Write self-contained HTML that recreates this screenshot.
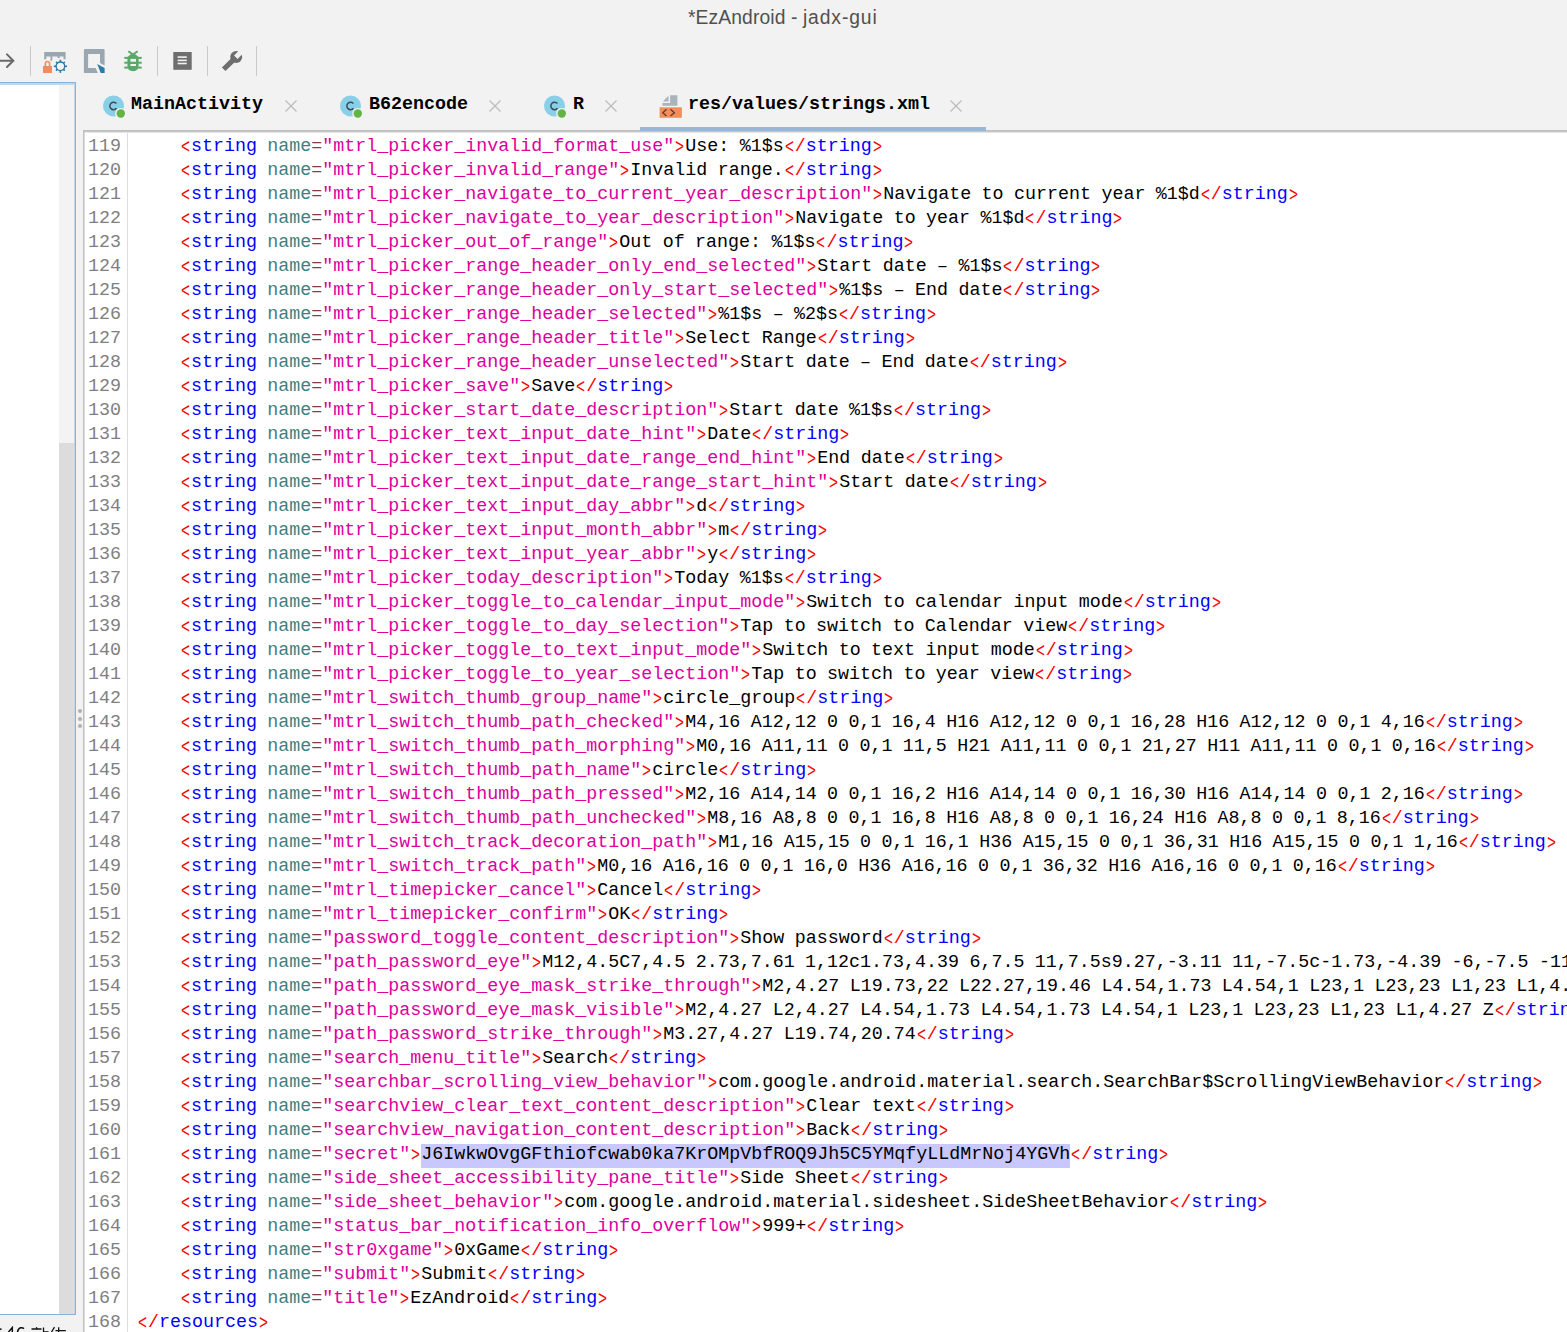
<!DOCTYPE html>
<html><head><meta charset="utf-8">
<style>
*{margin:0;padding:0;box-sizing:border-box}
html,body{width:1567px;height:1332px;overflow:hidden;background:#f2f2f2;font-family:"Liberation Sans",sans-serif;position:relative}
.abs{position:absolute}
#title{position:absolute;left:0;top:0;width:1567px;height:36px;text-align:center;font-size:19.3px;color:#505050;}
#title span{position:absolute;left:688px;top:7px;white-space:pre;letter-spacing:0.1px}#title b{font-weight:normal;letter-spacing:0.9px}
.sep{position:absolute;top:46px;width:1px;height:30px;background:#c9c9c9}
#left{position:absolute;left:0;top:82px;width:76px;height:1233px;background:#8ab1d7}
#linner{position:absolute;left:0;top:1px;width:75px;height:1231px;background:#c3d6ea}
#lwhite{position:absolute;left:0;top:2px;width:74px;height:1229px;background:#fff}
#lscroll{position:absolute;left:59px;top:0;width:15px;height:1229px;background:#f3f3f3}
#lthumb{position:absolute;left:0;top:358px;width:15px;height:871px;background:#dcdcdc}
.dot{position:absolute;left:78px;width:4px;height:4px;border-radius:50%;background:#b0b0b0}
#editor{position:absolute;left:83px;top:130px;width:1484px;height:1202px;background:#fff;}
#eb1{position:absolute;left:83px;top:130px;width:1484px;height:1px;background:#bfbfbf}
#eb2{position:absolute;left:83px;top:131px;width:1484px;height:1px;background:#c6c6c6}
#eb3{position:absolute;left:84px;top:132px;width:1483px;height:1px;background:#e4e4e4}
#eb4{position:absolute;left:83px;top:130px;width:1px;height:1202px;background:#c0c0c0}
#eb5{position:absolute;left:84px;top:132px;width:1px;height:1200px;background:#dcdcdc}
#gline{position:absolute;left:127px;top:133px;width:1px;height:1199px;background:#dddddd}
#gutter{position:absolute;left:85px;top:135px;width:36px;text-align:right;color:#808080;font-family:"Liberation Mono",monospace;font-size:18.333px;line-height:24px;white-space:pre}
#code{position:absolute;left:137px;top:135px;color:#000;font-family:"Liberation Mono",monospace;font-size:18.333px;line-height:24px;white-space:pre;word-spacing:-0.6px}
#code i{font-style:normal}
#code b.c{font-weight:normal;color:#ff0000;display:inline-block;transform:translateY(1.8px) scale(0.82,1.08)}
.ind{display:inline-block;width:42.9px}
.d{color:#ff0000}.t{color:#0000ff}.a{color:#3f7f7f}.o{color:#804040}.v{color:#dc009c}
#sel{position:absolute;left:421px;top:1144px;width:649px;height:24px;background:#c8c8ff}
.tab{position:absolute;top:93px;font-family:"Liberation Mono",monospace;font-weight:bold;font-size:18.333px;line-height:24px;color:#000;white-space:pre}
.x{position:absolute;top:100px}
</style></head><body>
<div id="title"><span>*EzAndroid - <b>jadx-gui</b></span></div>

<!-- toolbar -->
<svg class="abs" style="left:0;top:50px" width="16" height="22" viewBox="0 0 16 22"><path d="M-1 10.7H13.5M7 4.4L13.3 10.7L7 17" stroke="#6a6a6a" stroke-width="2" stroke-linecap="round" stroke-linejoin="round" fill="none"/></svg>
<div class="sep" style="left:30px"></div>
<div class="sep" style="left:157px"></div>
<div class="sep" style="left:207px"></div>
<div class="sep" style="left:256px"></div>

<!-- icon1 lock gear -->
<svg class="abs" style="left:42px;top:50px" width="26" height="24" viewBox="0 0 26 24">
<path d="M2.2 2.1H23.6V9.3H21.5V6.5H17.7V8.1H15.6V6.5H10.3V10.1L9.2 11.2H8.5V6.5H4.3V9.3H2.2Z" fill="#9aa7b0"/>
<rect x="1" y="16" width="9" height="7" fill="#f28c5a"/>
<path d="M3.4 16.2V13.6A2.1 2.1 0 0 1 7.6 13.6V16.2" stroke="#f28c5a" stroke-width="1.7" fill="none"/>
<g transform="translate(18.4 16.3)" fill="#2a7ca5">
<circle r="4.3" fill="none" stroke="#2a7ca5" stroke-width="1.3"/>
<rect x="-0.8" y="-6.6" width="1.6" height="2.6"/><rect x="-0.8" y="4" width="1.6" height="2.6"/>
<rect x="-6.6" y="-0.8" width="2.6" height="1.6"/><rect x="4" y="-0.8" width="2.6" height="1.6"/>
<g transform="rotate(45)"><rect x="-0.8" y="-6.2" width="1.6" height="2.2"/><rect x="-0.8" y="4" width="1.6" height="2.2"/>
<rect x="-6.2" y="-0.8" width="2.2" height="1.6"/><rect x="4" y="-0.8" width="2.2" height="1.6"/></g>
</g>
</svg>
<!-- icon2 square pen -->
<svg class="abs" style="left:83px;top:48px" width="23" height="26" viewBox="0 0 23 26">
<path d="M0.9 2.1Q0.9 1.1 2 1.1H20.5Q21.6 1.1 21.6 2.2V17.4L17 15V6H5.1V20.1H12.6L14.9 24.9H0.9Z" fill="#9aa7b0"/>
<path d="M14.2 15.9L21.6 20.1V24.9H17.7Z" fill="#2a7ca5"/>
</svg>
<!-- bug -->
<svg class="abs" style="left:123px;top:49px" width="20" height="23" viewBox="0 0 20 23">
<path d="M5.4 2.2L10 5.6L14.6 2.2" stroke="#59a869" stroke-width="2" fill="none"/>
<path d="M7.4 5.6Q10 4.2 12.6 5.6L15.6 7.9V16.5Q15.6 22.2 10 22.2Q4.4 22.2 4.4 16.5V7.9Z" fill="#59a869"/>
<rect x="1.3" y="7.9" width="3.6" height="2" fill="#59a869"/><rect x="15.1" y="7.9" width="3.6" height="2" fill="#59a869"/>
<rect x="1.3" y="12.7" width="3.6" height="2" fill="#59a869"/><rect x="15.1" y="12.7" width="3.6" height="2" fill="#59a869"/>
<rect x="1.3" y="17.6" width="3.6" height="2" fill="#59a869"/><rect x="15.1" y="17.6" width="3.6" height="2" fill="#59a869"/>
<rect x="7.4" y="9.9" width="5.6" height="2.8" fill="#f2f2f2"/><rect x="7.4" y="15" width="5.6" height="2" fill="#f2f2f2"/>
</svg>
<!-- log -->
<svg class="abs" style="left:173px;top:52px" width="19" height="18" viewBox="0 0 19 18">
<rect x="0.3" y="0" width="18.4" height="17.8" fill="#6e6e6e"/>
<rect x="4.6" y="4.3" width="9.2" height="1.6" fill="#f2f2f2"/><rect x="4.6" y="7.6" width="9.2" height="1.6" fill="#f2f2f2"/><rect x="4.6" y="10.7" width="9.2" height="1.6" fill="#f2f2f2"/>
</svg>
<!-- wrench -->
<svg class="abs" style="left:221px;top:50px" width="23" height="23" viewBox="0 0 23 23">
<defs><mask id="wm"><rect width="23" height="23" fill="#fff"/><path d="M19.5 -1L13.1 5.4L16.5 8.9L23.2 2.4Z" fill="#000"/></mask></defs>
<g fill="#6e6e6e" mask="url(#wm)"><path d="M0.9 17.5L4.5 21L13.6 12.2L10 8.6Z"/><circle cx="15.2" cy="6.9" r="6"/></g>
</svg>

<div id="left"><div id="linner"><div id="lwhite"><div id="lscroll"><div id="lthumb"></div></div></div></div></div>
<div class="dot" style="top:709px"></div><div class="dot" style="top:716.7px"></div><div class="dot" style="top:724.2px"></div>

<div id="editor"></div>
<div id="eb1"></div><div id="eb2"></div><div id="eb3"></div><div id="eb4"></div><div id="eb5"></div>
<div id="gline"></div>
<div id="sel"></div>
<div id="gutter">119
120
121
122
123
124
125
126
127
128
129
130
131
132
133
134
135
136
137
138
139
140
141
142
143
144
145
146
147
148
149
150
151
152
153
154
155
156
157
158
159
160
161
162
163
164
165
166
167
168</div>
<div id="code"><span class="ind"></span><b class="c">&lt;</b><i class="t">string</i> <i class="a">name</i><i class="o">=</i><i class="v">"mtrl_picker_invalid_format_use"</i><b class="c">&gt;</b>Use: %1$s<b class="c">&lt;</b><i class="d">/</i><i class="t">string</i><b class="c">&gt;</b>
<span class="ind"></span><b class="c">&lt;</b><i class="t">string</i> <i class="a">name</i><i class="o">=</i><i class="v">"mtrl_picker_invalid_range"</i><b class="c">&gt;</b>Invalid range.<b class="c">&lt;</b><i class="d">/</i><i class="t">string</i><b class="c">&gt;</b>
<span class="ind"></span><b class="c">&lt;</b><i class="t">string</i> <i class="a">name</i><i class="o">=</i><i class="v">"mtrl_picker_navigate_to_current_year_description"</i><b class="c">&gt;</b>Navigate to current year %1$d<b class="c">&lt;</b><i class="d">/</i><i class="t">string</i><b class="c">&gt;</b>
<span class="ind"></span><b class="c">&lt;</b><i class="t">string</i> <i class="a">name</i><i class="o">=</i><i class="v">"mtrl_picker_navigate_to_year_description"</i><b class="c">&gt;</b>Navigate to year %1$d<b class="c">&lt;</b><i class="d">/</i><i class="t">string</i><b class="c">&gt;</b>
<span class="ind"></span><b class="c">&lt;</b><i class="t">string</i> <i class="a">name</i><i class="o">=</i><i class="v">"mtrl_picker_out_of_range"</i><b class="c">&gt;</b>Out of range: %1$s<b class="c">&lt;</b><i class="d">/</i><i class="t">string</i><b class="c">&gt;</b>
<span class="ind"></span><b class="c">&lt;</b><i class="t">string</i> <i class="a">name</i><i class="o">=</i><i class="v">"mtrl_picker_range_header_only_end_selected"</i><b class="c">&gt;</b>Start date – %1$s<b class="c">&lt;</b><i class="d">/</i><i class="t">string</i><b class="c">&gt;</b>
<span class="ind"></span><b class="c">&lt;</b><i class="t">string</i> <i class="a">name</i><i class="o">=</i><i class="v">"mtrl_picker_range_header_only_start_selected"</i><b class="c">&gt;</b>%1$s – End date<b class="c">&lt;</b><i class="d">/</i><i class="t">string</i><b class="c">&gt;</b>
<span class="ind"></span><b class="c">&lt;</b><i class="t">string</i> <i class="a">name</i><i class="o">=</i><i class="v">"mtrl_picker_range_header_selected"</i><b class="c">&gt;</b>%1$s – %2$s<b class="c">&lt;</b><i class="d">/</i><i class="t">string</i><b class="c">&gt;</b>
<span class="ind"></span><b class="c">&lt;</b><i class="t">string</i> <i class="a">name</i><i class="o">=</i><i class="v">"mtrl_picker_range_header_title"</i><b class="c">&gt;</b>Select Range<b class="c">&lt;</b><i class="d">/</i><i class="t">string</i><b class="c">&gt;</b>
<span class="ind"></span><b class="c">&lt;</b><i class="t">string</i> <i class="a">name</i><i class="o">=</i><i class="v">"mtrl_picker_range_header_unselected"</i><b class="c">&gt;</b>Start date – End date<b class="c">&lt;</b><i class="d">/</i><i class="t">string</i><b class="c">&gt;</b>
<span class="ind"></span><b class="c">&lt;</b><i class="t">string</i> <i class="a">name</i><i class="o">=</i><i class="v">"mtrl_picker_save"</i><b class="c">&gt;</b>Save<b class="c">&lt;</b><i class="d">/</i><i class="t">string</i><b class="c">&gt;</b>
<span class="ind"></span><b class="c">&lt;</b><i class="t">string</i> <i class="a">name</i><i class="o">=</i><i class="v">"mtrl_picker_start_date_description"</i><b class="c">&gt;</b>Start date %1$s<b class="c">&lt;</b><i class="d">/</i><i class="t">string</i><b class="c">&gt;</b>
<span class="ind"></span><b class="c">&lt;</b><i class="t">string</i> <i class="a">name</i><i class="o">=</i><i class="v">"mtrl_picker_text_input_date_hint"</i><b class="c">&gt;</b>Date<b class="c">&lt;</b><i class="d">/</i><i class="t">string</i><b class="c">&gt;</b>
<span class="ind"></span><b class="c">&lt;</b><i class="t">string</i> <i class="a">name</i><i class="o">=</i><i class="v">"mtrl_picker_text_input_date_range_end_hint"</i><b class="c">&gt;</b>End date<b class="c">&lt;</b><i class="d">/</i><i class="t">string</i><b class="c">&gt;</b>
<span class="ind"></span><b class="c">&lt;</b><i class="t">string</i> <i class="a">name</i><i class="o">=</i><i class="v">"mtrl_picker_text_input_date_range_start_hint"</i><b class="c">&gt;</b>Start date<b class="c">&lt;</b><i class="d">/</i><i class="t">string</i><b class="c">&gt;</b>
<span class="ind"></span><b class="c">&lt;</b><i class="t">string</i> <i class="a">name</i><i class="o">=</i><i class="v">"mtrl_picker_text_input_day_abbr"</i><b class="c">&gt;</b>d<b class="c">&lt;</b><i class="d">/</i><i class="t">string</i><b class="c">&gt;</b>
<span class="ind"></span><b class="c">&lt;</b><i class="t">string</i> <i class="a">name</i><i class="o">=</i><i class="v">"mtrl_picker_text_input_month_abbr"</i><b class="c">&gt;</b>m<b class="c">&lt;</b><i class="d">/</i><i class="t">string</i><b class="c">&gt;</b>
<span class="ind"></span><b class="c">&lt;</b><i class="t">string</i> <i class="a">name</i><i class="o">=</i><i class="v">"mtrl_picker_text_input_year_abbr"</i><b class="c">&gt;</b>y<b class="c">&lt;</b><i class="d">/</i><i class="t">string</i><b class="c">&gt;</b>
<span class="ind"></span><b class="c">&lt;</b><i class="t">string</i> <i class="a">name</i><i class="o">=</i><i class="v">"mtrl_picker_today_description"</i><b class="c">&gt;</b>Today %1$s<b class="c">&lt;</b><i class="d">/</i><i class="t">string</i><b class="c">&gt;</b>
<span class="ind"></span><b class="c">&lt;</b><i class="t">string</i> <i class="a">name</i><i class="o">=</i><i class="v">"mtrl_picker_toggle_to_calendar_input_mode"</i><b class="c">&gt;</b>Switch to calendar input mode<b class="c">&lt;</b><i class="d">/</i><i class="t">string</i><b class="c">&gt;</b>
<span class="ind"></span><b class="c">&lt;</b><i class="t">string</i> <i class="a">name</i><i class="o">=</i><i class="v">"mtrl_picker_toggle_to_day_selection"</i><b class="c">&gt;</b>Tap to switch to Calendar view<b class="c">&lt;</b><i class="d">/</i><i class="t">string</i><b class="c">&gt;</b>
<span class="ind"></span><b class="c">&lt;</b><i class="t">string</i> <i class="a">name</i><i class="o">=</i><i class="v">"mtrl_picker_toggle_to_text_input_mode"</i><b class="c">&gt;</b>Switch to text input mode<b class="c">&lt;</b><i class="d">/</i><i class="t">string</i><b class="c">&gt;</b>
<span class="ind"></span><b class="c">&lt;</b><i class="t">string</i> <i class="a">name</i><i class="o">=</i><i class="v">"mtrl_picker_toggle_to_year_selection"</i><b class="c">&gt;</b>Tap to switch to year view<b class="c">&lt;</b><i class="d">/</i><i class="t">string</i><b class="c">&gt;</b>
<span class="ind"></span><b class="c">&lt;</b><i class="t">string</i> <i class="a">name</i><i class="o">=</i><i class="v">"mtrl_switch_thumb_group_name"</i><b class="c">&gt;</b>circle_group<b class="c">&lt;</b><i class="d">/</i><i class="t">string</i><b class="c">&gt;</b>
<span class="ind"></span><b class="c">&lt;</b><i class="t">string</i> <i class="a">name</i><i class="o">=</i><i class="v">"mtrl_switch_thumb_path_checked"</i><b class="c">&gt;</b>M4,16 A12,12 0 0,1 16,4 H16 A12,12 0 0,1 16,28 H16 A12,12 0 0,1 4,16<b class="c">&lt;</b><i class="d">/</i><i class="t">string</i><b class="c">&gt;</b>
<span class="ind"></span><b class="c">&lt;</b><i class="t">string</i> <i class="a">name</i><i class="o">=</i><i class="v">"mtrl_switch_thumb_path_morphing"</i><b class="c">&gt;</b>M0,16 A11,11 0 0,1 11,5 H21 A11,11 0 0,1 21,27 H11 A11,11 0 0,1 0,16<b class="c">&lt;</b><i class="d">/</i><i class="t">string</i><b class="c">&gt;</b>
<span class="ind"></span><b class="c">&lt;</b><i class="t">string</i> <i class="a">name</i><i class="o">=</i><i class="v">"mtrl_switch_thumb_path_name"</i><b class="c">&gt;</b>circle<b class="c">&lt;</b><i class="d">/</i><i class="t">string</i><b class="c">&gt;</b>
<span class="ind"></span><b class="c">&lt;</b><i class="t">string</i> <i class="a">name</i><i class="o">=</i><i class="v">"mtrl_switch_thumb_path_pressed"</i><b class="c">&gt;</b>M2,16 A14,14 0 0,1 16,2 H16 A14,14 0 0,1 16,30 H16 A14,14 0 0,1 2,16<b class="c">&lt;</b><i class="d">/</i><i class="t">string</i><b class="c">&gt;</b>
<span class="ind"></span><b class="c">&lt;</b><i class="t">string</i> <i class="a">name</i><i class="o">=</i><i class="v">"mtrl_switch_thumb_path_unchecked"</i><b class="c">&gt;</b>M8,16 A8,8 0 0,1 16,8 H16 A8,8 0 0,1 16,24 H16 A8,8 0 0,1 8,16<b class="c">&lt;</b><i class="d">/</i><i class="t">string</i><b class="c">&gt;</b>
<span class="ind"></span><b class="c">&lt;</b><i class="t">string</i> <i class="a">name</i><i class="o">=</i><i class="v">"mtrl_switch_track_decoration_path"</i><b class="c">&gt;</b>M1,16 A15,15 0 0,1 16,1 H36 A15,15 0 0,1 36,31 H16 A15,15 0 0,1 1,16<b class="c">&lt;</b><i class="d">/</i><i class="t">string</i><b class="c">&gt;</b>
<span class="ind"></span><b class="c">&lt;</b><i class="t">string</i> <i class="a">name</i><i class="o">=</i><i class="v">"mtrl_switch_track_path"</i><b class="c">&gt;</b>M0,16 A16,16 0 0,1 16,0 H36 A16,16 0 0,1 36,32 H16 A16,16 0 0,1 0,16<b class="c">&lt;</b><i class="d">/</i><i class="t">string</i><b class="c">&gt;</b>
<span class="ind"></span><b class="c">&lt;</b><i class="t">string</i> <i class="a">name</i><i class="o">=</i><i class="v">"mtrl_timepicker_cancel"</i><b class="c">&gt;</b>Cancel<b class="c">&lt;</b><i class="d">/</i><i class="t">string</i><b class="c">&gt;</b>
<span class="ind"></span><b class="c">&lt;</b><i class="t">string</i> <i class="a">name</i><i class="o">=</i><i class="v">"mtrl_timepicker_confirm"</i><b class="c">&gt;</b>OK<b class="c">&lt;</b><i class="d">/</i><i class="t">string</i><b class="c">&gt;</b>
<span class="ind"></span><b class="c">&lt;</b><i class="t">string</i> <i class="a">name</i><i class="o">=</i><i class="v">"password_toggle_content_description"</i><b class="c">&gt;</b>Show password<b class="c">&lt;</b><i class="d">/</i><i class="t">string</i><b class="c">&gt;</b>
<span class="ind"></span><b class="c">&lt;</b><i class="t">string</i> <i class="a">name</i><i class="o">=</i><i class="v">"path_password_eye"</i><b class="c">&gt;</b>M12,4.5C7,4.5 2.73,7.61 1,12c1.73,4.39 6,7.5 11,7.5s9.27,-3.11 11,-7.5c-1.73,-4.39 -6,-7.5 -11,-7.5z<b class="c">&lt;</b><i class="d">/</i><i class="t">string</i><b class="c">&gt;</b>
<span class="ind"></span><b class="c">&lt;</b><i class="t">string</i> <i class="a">name</i><i class="o">=</i><i class="v">"path_password_eye_mask_strike_through"</i><b class="c">&gt;</b>M2,4.27 L19.73,22 L22.27,19.46 L4.54,1.73 L4.54,1 L23,1 L23,23 L1,23 L1,4.27 Z<b class="c">&lt;</b><i class="d">/</i><i class="t">string</i><b class="c">&gt;</b>
<span class="ind"></span><b class="c">&lt;</b><i class="t">string</i> <i class="a">name</i><i class="o">=</i><i class="v">"path_password_eye_mask_visible"</i><b class="c">&gt;</b>M2,4.27 L2,4.27 L4.54,1.73 L4.54,1.73 L4.54,1 L23,1 L23,23 L1,23 L1,4.27 Z<b class="c">&lt;</b><i class="d">/</i><i class="t">string</i><b class="c">&gt;</b>
<span class="ind"></span><b class="c">&lt;</b><i class="t">string</i> <i class="a">name</i><i class="o">=</i><i class="v">"path_password_strike_through"</i><b class="c">&gt;</b>M3.27,4.27 L19.74,20.74<b class="c">&lt;</b><i class="d">/</i><i class="t">string</i><b class="c">&gt;</b>
<span class="ind"></span><b class="c">&lt;</b><i class="t">string</i> <i class="a">name</i><i class="o">=</i><i class="v">"search_menu_title"</i><b class="c">&gt;</b>Search<b class="c">&lt;</b><i class="d">/</i><i class="t">string</i><b class="c">&gt;</b>
<span class="ind"></span><b class="c">&lt;</b><i class="t">string</i> <i class="a">name</i><i class="o">=</i><i class="v">"searchbar_scrolling_view_behavior"</i><b class="c">&gt;</b>com.google.android.material.search.SearchBar$ScrollingViewBehavior<b class="c">&lt;</b><i class="d">/</i><i class="t">string</i><b class="c">&gt;</b>
<span class="ind"></span><b class="c">&lt;</b><i class="t">string</i> <i class="a">name</i><i class="o">=</i><i class="v">"searchview_clear_text_content_description"</i><b class="c">&gt;</b>Clear text<b class="c">&lt;</b><i class="d">/</i><i class="t">string</i><b class="c">&gt;</b>
<span class="ind"></span><b class="c">&lt;</b><i class="t">string</i> <i class="a">name</i><i class="o">=</i><i class="v">"searchview_navigation_content_description"</i><b class="c">&gt;</b>Back<b class="c">&lt;</b><i class="d">/</i><i class="t">string</i><b class="c">&gt;</b>
<span class="ind"></span><b class="c">&lt;</b><i class="t">string</i> <i class="a">name</i><i class="o">=</i><i class="v">"secret"</i><b class="c">&gt;</b>J6IwkwOvgGFthiofcwab0ka7KrOMpVbfROQ9Jh5C5YMqfyLLdMrNoj4YGVh<b class="c">&lt;</b><i class="d">/</i><i class="t">string</i><b class="c">&gt;</b>
<span class="ind"></span><b class="c">&lt;</b><i class="t">string</i> <i class="a">name</i><i class="o">=</i><i class="v">"side_sheet_accessibility_pane_title"</i><b class="c">&gt;</b>Side Sheet<b class="c">&lt;</b><i class="d">/</i><i class="t">string</i><b class="c">&gt;</b>
<span class="ind"></span><b class="c">&lt;</b><i class="t">string</i> <i class="a">name</i><i class="o">=</i><i class="v">"side_sheet_behavior"</i><b class="c">&gt;</b>com.google.android.material.sidesheet.SideSheetBehavior<b class="c">&lt;</b><i class="d">/</i><i class="t">string</i><b class="c">&gt;</b>
<span class="ind"></span><b class="c">&lt;</b><i class="t">string</i> <i class="a">name</i><i class="o">=</i><i class="v">"status_bar_notification_info_overflow"</i><b class="c">&gt;</b>999+<b class="c">&lt;</b><i class="d">/</i><i class="t">string</i><b class="c">&gt;</b>
<span class="ind"></span><b class="c">&lt;</b><i class="t">string</i> <i class="a">name</i><i class="o">=</i><i class="v">"str0xgame"</i><b class="c">&gt;</b>0xGame<b class="c">&lt;</b><i class="d">/</i><i class="t">string</i><b class="c">&gt;</b>
<span class="ind"></span><b class="c">&lt;</b><i class="t">string</i> <i class="a">name</i><i class="o">=</i><i class="v">"submit"</i><b class="c">&gt;</b>Submit<b class="c">&lt;</b><i class="d">/</i><i class="t">string</i><b class="c">&gt;</b>
<span class="ind"></span><b class="c">&lt;</b><i class="t">string</i> <i class="a">name</i><i class="o">=</i><i class="v">"title"</i><b class="c">&gt;</b>EzAndroid<b class="c">&lt;</b><i class="d">/</i><i class="t">string</i><b class="c">&gt;</b>
<b class="c">&lt;</b><i class="d">/</i><i class="t">resources</i><b class="c">&gt;</b></div>

<!-- tabs -->
<svg class="abs" style="left:103px;top:94px" width="28" height="26" viewBox="0 0 28 26"><defs><mask id="m103"><rect width="28" height="26" fill="#fff"/><circle cx="17.8" cy="19.5" r="5.6" fill="#000"/></mask></defs><circle cx="10.5" cy="11.9" r="10.5" fill="#88cfe8" mask="url(#m103)"/><path d="M13.4 9.6A3.7 3.7 0 1 0 13.4 14.3" stroke="#3d4a52" stroke-width="1.5" fill="none"/><circle cx="17.8" cy="19.5" r="4.2" fill="#62b543"/></svg><svg class="abs" style="left:340px;top:94px" width="28" height="26" viewBox="0 0 28 26"><defs><mask id="m340"><rect width="28" height="26" fill="#fff"/><circle cx="17.8" cy="19.5" r="5.6" fill="#000"/></mask></defs><circle cx="10.5" cy="11.9" r="10.5" fill="#88cfe8" mask="url(#m340)"/><path d="M13.4 9.6A3.7 3.7 0 1 0 13.4 14.3" stroke="#3d4a52" stroke-width="1.5" fill="none"/><circle cx="17.8" cy="19.5" r="4.2" fill="#62b543"/></svg><svg class="abs" style="left:544px;top:94px" width="28" height="26" viewBox="0 0 28 26"><defs><mask id="m544"><rect width="28" height="26" fill="#fff"/><circle cx="17.8" cy="19.5" r="5.6" fill="#000"/></mask></defs><circle cx="10.5" cy="11.9" r="10.5" fill="#88cfe8" mask="url(#m544)"/><path d="M13.4 9.6A3.7 3.7 0 1 0 13.4 14.3" stroke="#3d4a52" stroke-width="1.5" fill="none"/><circle cx="17.8" cy="19.5" r="4.2" fill="#62b543"/></svg><svg class="abs" style="left:285px;top:100px" width="12" height="12" viewBox="0 0 12 12"><path d="M0.5 0.5L11.5 11.5M11.5 0.5L0.5 11.5" stroke="#b9bdc1" stroke-width="1.3"/></svg><svg class="abs" style="left:489px;top:100px" width="12" height="12" viewBox="0 0 12 12"><path d="M0.5 0.5L11.5 11.5M11.5 0.5L0.5 11.5" stroke="#b9bdc1" stroke-width="1.3"/></svg><svg class="abs" style="left:605px;top:100px" width="12" height="12" viewBox="0 0 12 12"><path d="M0.5 0.5L11.5 11.5M11.5 0.5L0.5 11.5" stroke="#b9bdc1" stroke-width="1.3"/></svg><svg class="abs" style="left:950px;top:100px" width="12" height="12" viewBox="0 0 12 12"><path d="M0.5 0.5L11.5 11.5M11.5 0.5L0.5 11.5" stroke="#b9bdc1" stroke-width="1.3"/></svg>
<div class="tab" style="left:131px">MainActivity</div>
<div class="tab" style="left:369px">B62encode</div>
<div class="tab" style="left:573px">R</div>
<div class="tab" style="left:688px">res/values/strings.xml</div>
<svg class="abs" style="left:658px;top:94px" width="26" height="26" viewBox="0 0 26 26">
<path d="M12.1 1.3H19.4V11.7H4.4V9H12.1Z" fill="#a9b4bc"/>
<path d="M4.8 7.4L10.5 1.7V7.4Z" fill="#a9b4bc"/>
<rect x="1.6" y="13.3" width="22.3" height="10.5" fill="#f28e5b"/>
<path d="M8.5 15.3L4.8 18.7L8.5 22M12.4 15.3L16.4 18.7L12.4 22" stroke="#5a3d32" stroke-width="1.3" fill="none"/>
</svg>
<div class="abs" style="left:640px;top:127px;width:346px;height:4px;background:#95b8dc"></div>

<!-- bottom status text fragment -->
<svg class="abs" style="left:0;top:1326px" width="70" height="6" viewBox="0 1326 70 6">
<path d="M-2 1332Q-1 1327.8 1.5 1329.5" stroke="#111" stroke-width="1.6" fill="none"/>
<path d="M8.5 1332L12.3 1327.6V1332" stroke="#111" stroke-width="1.5" fill="none"/>
<path d="M24 1328.6Q22.5 1327.3 20.5 1327.8Q18 1328.6 17.5 1332" stroke="#111" stroke-width="1.5" fill="none"/>
<path d="M31.5 1329H41.5M36.3 1327.2L37.2 1329M43.5 1327.5V1332H48.5" stroke="#111" stroke-width="1.3" fill="none"/>
<path d="M54.5 1327.2L51.5 1332M58.7 1327.2V1332M55.5 1330.6H65.8" stroke="#111" stroke-width="1.3" fill="none"/>
</svg>
</body></html>
